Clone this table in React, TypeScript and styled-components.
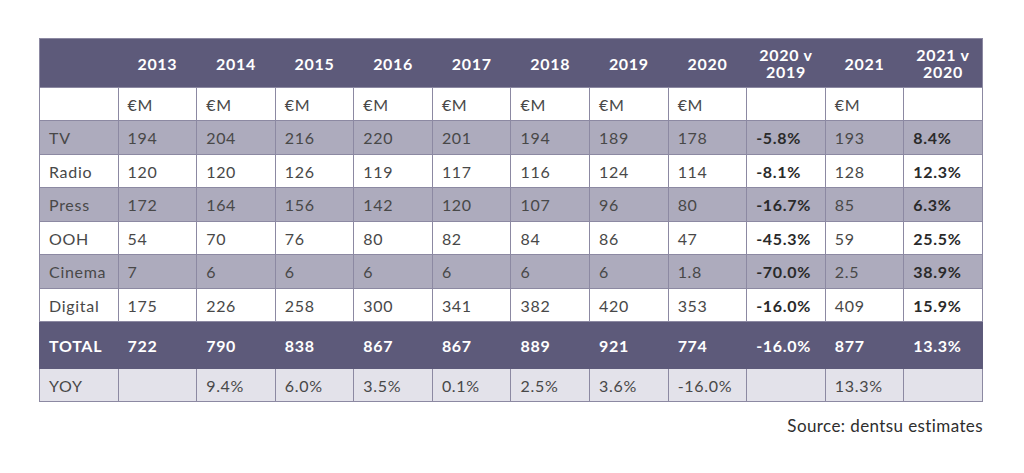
import React from 'react';
import styled, { createGlobalStyle } from 'styled-components';

const GlobalStyle = createGlobalStyle`
  html, body {
    margin: 0;
    padding: 0;
    background: #ffffff;
  }
  body {
    font-family: Lato, "Open Sans", "Liberation Sans", sans-serif;
    color: #444444;
  }
`;

const Page = styled.div`
  width: 1024px;
  height: 473px;
  box-sizing: border-box;
  padding: 38px 41px 0 39px;
  display: flex;
  flex-direction: column;
  align-items: stretch;
`;

const Table = styled.table`
  width: 944px;
  table-layout: fixed;
  border-collapse: collapse;
  border: 1px solid #8c89a2;
  font-size: 16px;
  letter-spacing: 0.7px;
`;

const HeadRow = styled.tr`
  height: 49px;
  background: #5d5a7a;
`;

const HeadCell = styled.th`
  color: #ffffff;
  font-weight: 700;
  font-size: 16px;
  line-height: 17px;
  text-align: center;
  padding: 0 4px;
  border: none;
`;

type RowKind = 'white' | 'shade' | 'total' | 'yoy';

const rowBg: Record<RowKind, string> = {
  white: '#ffffff',
  shade: '#adabbd',
  total: '#5d5a7a',
  yoy: '#e3e2ea',
};

const rowHeight: Record<RowKind, number> = {
  white: 33,
  shade: 34,
  total: 47,
  yoy: 33,
};

const Row = styled.tr<{ $kind: RowKind }>`
  height: ${p => rowHeight[p.$kind]}px;
  background: ${p => rowBg[p.$kind]};
`;

const Cell = styled.td<{ $bold?: boolean; $total?: boolean }>`
  padding: 0 0 0 9px;
  border: 1px solid #8c89a2;
  color: ${p => (p.$total ? '#ffffff' : p.$bold ? '#2a2a2a' : '#484848')};
  font-weight: ${p => (p.$bold || p.$total ? 700 : 400)};
  white-space: nowrap;
  ${p => p.$total && 'border-color: #5d5a7a;'}
`;

const Source = styled.div`
  align-self: flex-end;
  margin-top: 13px;
  font-size: 17px;
  letter-spacing: 0.4px;
  color: #2e2e2e;
`;

const headers = ['', '2013', '2014', '2015', '2016', '2017', '2018', '2019', '2020', '2020 v 2019', '2021', '2021 v 2020'];

const units = ['', '€M', '€M', '€M', '€M', '€M', '€M', '€M', '€M', '', '€M', ''];

const data: { label: string; values: string[]; kind: RowKind }[] = [
  { label: 'TV', values: ['194', '204', '216', '220', '201', '194', '189', '178', '-5.8%', '193', '8.4%'], kind: 'shade' },
  { label: 'Radio', values: ['120', '120', '126', '119', '117', '116', '124', '114', '-8.1%', '128', '12.3%'], kind: 'white' },
  { label: 'Press', values: ['172', '164', '156', '142', '120', '107', '96', '80', '-16.7%', '85', '6.3%'], kind: 'shade' },
  { label: 'OOH', values: ['54', '70', '76', '80', '82', '84', '86', '47', '-45.3%', '59', '25.5%'], kind: 'white' },
  { label: 'Cinema', values: ['7', '6', '6', '6', '6', '6', '6', '1.8', '-70.0%', '2.5', '38.9%'], kind: 'shade' },
  { label: 'Digital', values: ['175', '226', '258', '300', '341', '382', '420', '353', '-16.0%', '409', '15.9%'], kind: 'white' },
];

const total = ['722', '790', '838', '867', '867', '889', '921', '774', '-16.0%', '877', '13.3%'];
const yoy = ['', '9.4%', '6.0%', '3.5%', '0.1%', '2.5%', '3.6%', '-16.0%', '', '13.3%', ''];

// the two "v" columns (index 8 and 10 in values) are shown in bold
const isChange = (i: number) => i === 8 || i === 10;

export default function App() {
  return (
    <>
      <GlobalStyle />
      <Page>
        <Table>
          <thead>
            <HeadRow>
              {headers.map((h, i) => (
                <HeadCell key={i}>{h}</HeadCell>
              ))}
            </HeadRow>
          </thead>
          <tbody>
            <Row $kind="white">
              {units.map((u, i) => (
                <Cell key={i}>{u}</Cell>
              ))}
            </Row>
            {data.map(row => (
              <Row key={row.label} $kind={row.kind}>
                <Cell>{row.label}</Cell>
                {row.values.map((v, i) => (
                  <Cell key={i} $bold={isChange(i)}>{v}</Cell>
                ))}
              </Row>
            ))}
            <Row $kind="total">
              <Cell $total>TOTAL</Cell>
              {total.map((v, i) => (
                <Cell key={i} $total>{v}</Cell>
              ))}
            </Row>
            <Row $kind="yoy">
              <Cell>YOY</Cell>
              {yoy.map((v, i) => (
                <Cell key={i}>{v}</Cell>
              ))}
            </Row>
          </tbody>
        </Table>
        <Source>Source: dentsu estimates</Source>
      </Page>
    </>
  );
}
